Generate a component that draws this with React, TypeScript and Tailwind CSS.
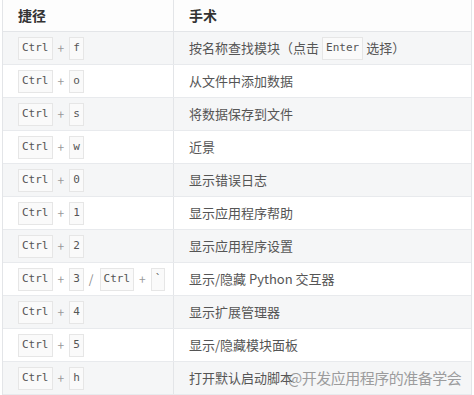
const rows: { keys: string[][]; desc: React.ReactNode }[] = [
  { keys: [["Ctrl", "f"]], desc: null },
  { keys: [["Ctrl", "o"]], desc: "从文件中添加数据" },
  { keys: [["Ctrl", "s"]], desc: "将数据保存到文件" },
  { keys: [["Ctrl", "w"]], desc: "近景" },
  { keys: [["Ctrl", "0"]], desc: "显示错误日志" },
  { keys: [["Ctrl", "1"]], desc: "显示应用程序帮助" },
  { keys: [["Ctrl", "2"]], desc: "显示应用程序设置" },
  { keys: [["Ctrl", "3"], ["Ctrl", "`"]], desc: "显示/隐藏 Python 交互器" },
  { keys: [["Ctrl", "4"]], desc: "显示扩展管理器" },
  { keys: [["Ctrl", "5"]], desc: "显示/隐藏模块面板" },
  { keys: [["Ctrl", "h"]], desc: "打开默认启动脚本" },
];

function Kbd({ children }: { children: string }) {
  return (
    <span className="inline-flex items-center h-[23px] px-[3px] bg-[#fafafa] border border-[#e6e6e6] text-[11px] text-[#555] font-['DejaVu_Sans_Mono',monospace]">
      {children}
    </span>
  );
}

export default function App() {
  return (
    <div className="w-[474px] h-[395px] bg-white overflow-hidden relative font-['Noto_Sans_CJK_SC','Noto_Sans',sans-serif]">
      <div className="ml-[2px] mr-[2px] border-l border-r border-[#e3e5e8]">
        {/* header */}
        <div className="flex h-[32px] bg-[#fdfdfd] border-b border-[#e3e5e8] text-[14px] font-bold text-[#333]">
          <div className="w-[171px] border-r border-[#e3e5e8] pl-[15px] flex items-center">捷径</div>
          <div className="flex-1 pl-[15px] flex items-center">手术</div>
        </div>
        {rows.map((row, i) => (
          <div
            key={i}
            className={`flex h-[33px] border-b border-[#e8eaed] ${i % 2 === 0 ? "bg-[#f5f6f7]" : "bg-white"}`}
          >
            <div className="w-[171px] border-r border-[#e3e5e8] pl-[15px] flex items-center gap-[5px] text-[12px] text-[#999]">
              {row.keys.map((combo, j) => (
                <span key={j} className="flex items-center gap-[5px]">
                  {j > 0 && <span className="text-[#888] mr-[1px]">/</span>}
                  <Kbd>{combo[0]}</Kbd>
                  <span>+</span>
                  <Kbd>{combo[1]}</Kbd>
                </span>
              ))}
            </div>
            <div className="flex-1 pl-[15px] flex items-center text-[13px] text-[#555]">
              {row.desc ?? (
                <>
                  按名称查找模块（点击
                  <span className="mx-[3px]">
                    <Kbd>Enter</Kbd>
                  </span>
                  选择）
                </>
              )}
            </div>
          </div>
        ))}
      </div>
      <div className="absolute left-[288px] top-[367px] text-[15px] text-[#777] opacity-70 tracking-[-0.5px] whitespace-nowrap">
        @开发应用程序的准备学会
      </div>
    </div>
  );
}
